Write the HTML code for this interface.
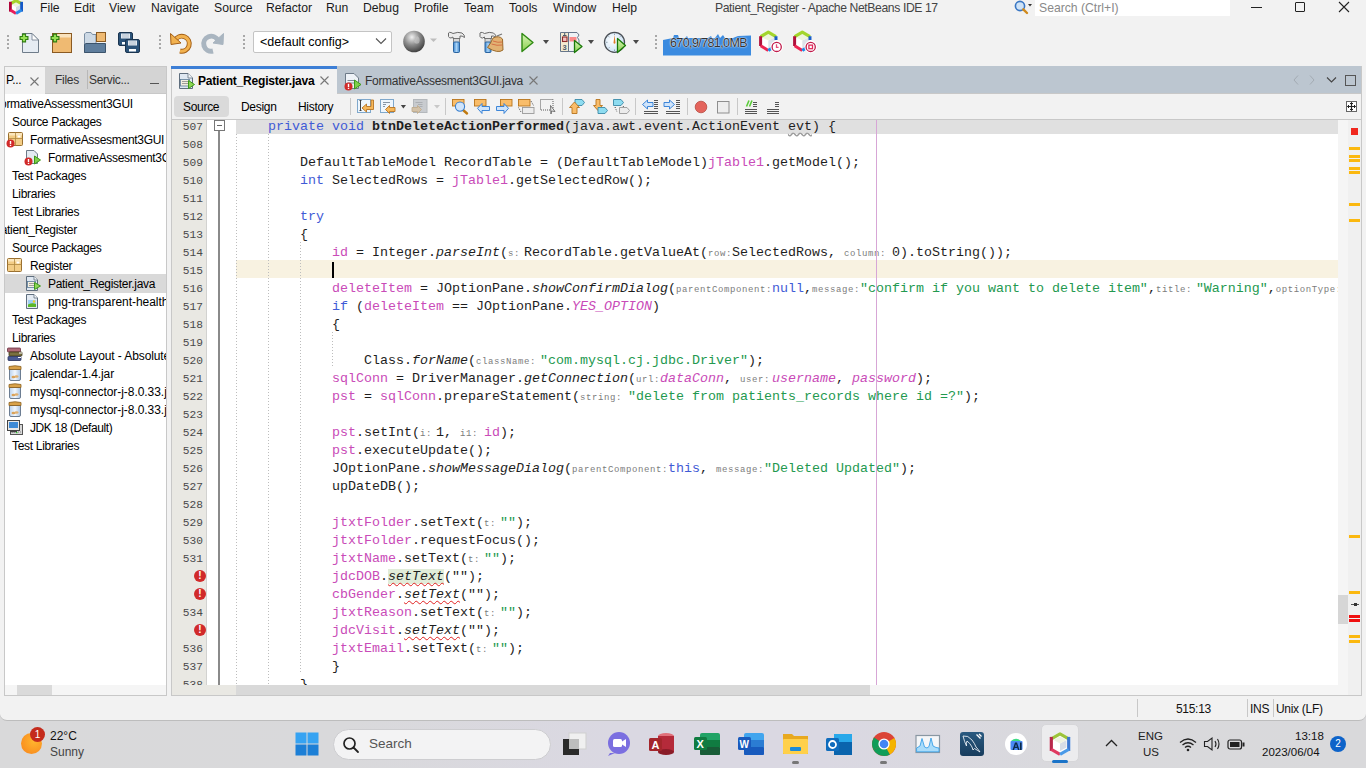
<!DOCTYPE html>
<html><head><meta charset="utf-8">
<style>
*{box-sizing:border-box}
html,body{margin:0;padding:0}
body{width:1366px;height:768px;overflow:hidden;position:relative;background:#f2f2f2;font-family:"Liberation Sans",sans-serif;color:#000}
.a{position:absolute}
.t{position:absolute;white-space:nowrap;line-height:1}
.menu{font-size:12.2px;top:2px;color:#1a1a1a}
/* panels */
#lp{left:4px;top:66px;width:163px;height:630px;border:1px solid #c8c8c8;background:#fff;overflow:hidden}
#lptabs{left:0;top:0;width:161px;height:27px;background:#d4d4d4;border-bottom:1px solid #c8c8c8}
.tree{font-size:12px;letter-spacing:-0.3px;color:#000}
#ed{left:171px;top:66px;width:1191px;height:630px;border:1px solid #c8c8c8;border-top:0;background:#f2f2f2}
#edtabs{left:0;top:0;width:1189px;height:27px;background:#bcc6d0}
#code{left:0;top:54px;width:1189px;height:565px;border-top:0;background:#fff;overflow:hidden}
.ln{position:absolute;left:64px;height:18px;width:1102px;white-space:pre;font-family:"Liberation Mono",monospace;font-size:13.33px;line-height:22px;color:#1e1e1e}
.hl0{background:#e0e0e0}
.hl1{background:#f8f2e1}
.k{color:#3f5bd6}
.f{color:#c94bb8}
.fi{color:#c94bb8;font-style:italic}
.i{font-style:italic}
.s{color:#23994f}
.b{font-weight:bold}
.u{text-decoration:underline wavy #9a9a9a;text-underline-offset:2px}
.h{display:inline-block;font-size:9px;letter-spacing:0.6px;color:#7c7c7c;vertical-align:baseline;overflow:visible;white-space:pre}
.e{font-style:italic;text-decoration:underline wavy #e02020;text-decoration-thickness:1px;text-underline-offset:2px}
.eh{background:#e1ecd9}
.caret{display:inline-block;width:2px;height:16px;background:#000;vertical-align:-4px}
.gn{position:absolute;left:0px;width:31px;height:18px;text-align:right;font-family:"Liberation Mono",monospace;font-size:11.2px;line-height:23px;color:#4a4a4a}
.err{display:inline-block;width:12px;height:12px;border-radius:50%;background:#d12a2a;vertical-align:-2px;position:relative;margin-right:-3px}
.err:after{content:"!";position:absolute;left:0;top:-1px;width:12px;text-align:center;color:#fff;font:bold 10px "Liberation Sans",sans-serif;line-height:14px}
.guide{position:absolute;top:0;width:1px;height:566px;background-image:linear-gradient(#bdbdbd 34%,transparent 34%);background-size:1px 3px}
.tb{font-size:12px;letter-spacing:-0.3px;color:#111}
.tk{position:absolute;top:0;height:100%}
</style></head>
<body>
<div class="a" style="left:0;top:700px;width:1366px;height:68px;background:linear-gradient(90deg,#d9d9da 0%,#d9d9db 25%,#dad8e2 45%,#dad8e2 60%,#d9d9dc 80%,#d9d9db 100%)"></div>
<div class="a" style="left:0;top:680px;width:1366px;height:41px;background:#f2f2f2;border-bottom:1px solid #bdbdbd;border-radius:0 0 7px 7px"></div>
<!-- ===== title / menu bar ===== -->
<svg class="a" style="left:0;top:0" width="30" height="18" viewBox="0 0 30 18">
 <path d="M16 -0.5L23 3.2V10.8L16 14.8L9 10.8V3.2Z" fill="#fff"/>
 <path d="M16 7L21 4.3V10L16 12.8Z" fill="#d3dce6"/>
 <path d="M16 1.8L21 4.3L16 7L11 4.3Z" fill="#eef5dc"/>
 <path d="M10.4 3.6L16 0.6L21.6 3.6" fill="none" stroke="#a6d12a" stroke-width="3" stroke-linejoin="round"/>
 <path d="M10.4 3.2V10.2" fill="none" stroke="#b0053a" stroke-width="2.8" stroke-linecap="square"/>
 <path d="M10.4 10L16 13.5" fill="none" stroke="#ea1c58" stroke-width="2.8"/>
 <path d="M21.6 3.2V10.2" fill="none" stroke="#1458c8" stroke-width="2.8" stroke-linecap="square"/>
 <path d="M21.6 10L16 13.5" fill="none" stroke="#2a8ae8" stroke-width="2.8"/>
</svg>
<div class="t menu" style="left:40px">File</div>
<div class="t menu" style="left:74px">Edit</div>
<div class="t menu" style="left:109px">View</div>
<div class="t menu" style="left:151px">Navigate</div>
<div class="t menu" style="left:214px">Source</div>
<div class="t menu" style="left:266px">Refactor</div>
<div class="t menu" style="left:326px">Run</div>
<div class="t menu" style="left:363px">Debug</div>
<div class="t menu" style="left:414px">Profile</div>
<div class="t menu" style="left:464px">Team</div>
<div class="t menu" style="left:509px">Tools</div>
<div class="t menu" style="left:553px">Window</div>
<div class="t menu" style="left:612px">Help</div>
<div class="t menu" style="left:715px;color:#444;letter-spacing:-0.4px">Patient_Register - Apache NetBeans IDE 17</div>
<svg class="a" style="left:1013px;top:0px" width="20" height="16" viewBox="0 0 20 16">
 <circle cx="7" cy="6" r="4.6" fill="#cfe3f7" stroke="#3a77c4" stroke-width="1.6"/>
 <line x1="10.3" y1="9.3" x2="14" y2="13" stroke="#d08a1c" stroke-width="2.4" stroke-linecap="round"/>
 <polygon points="15,4 19,4 17,6.5" fill="#333"/>
</svg>
<div class="a" style="left:1035px;top:0;width:195px;height:16px;background:#fff"></div>
<div class="t menu" style="left:1039px;color:#8a8a8a">Search (Ctrl+I)</div>
<div class="a" style="left:1251px;top:7px;width:11px;height:1px;background:#222"></div>
<div class="a" style="left:1295px;top:2px;width:10px;height:10px;border:1px solid #222;border-radius:1px"></div>
<svg class="a" style="left:1338px;top:1px" width="12" height="12" viewBox="0 0 12 12"><path d="M1 1L11 11M11 1L1 11" stroke="#222" stroke-width="1.1"/></svg>

<!-- ===== toolbar ===== -->
<!-- grips -->
<div class="a" style="left:7px;top:35px;width:2px;height:14px;background-image:linear-gradient(#a8a8a8 50%,transparent 50%);background-size:2px 4px"></div>
<div class="a" style="left:159px;top:35px;width:2px;height:14px;background-image:linear-gradient(#a8a8a8 50%,transparent 50%);background-size:2px 4px"></div>
<div class="a" style="left:243px;top:35px;width:2px;height:14px;background-image:linear-gradient(#a8a8a8 50%,transparent 50%);background-size:2px 4px"></div>
<div class="a" style="left:655px;top:35px;width:2px;height:14px;background-image:linear-gradient(#a8a8a8 50%,transparent 50%);background-size:2px 4px"></div>
<svg class="a" style="left:0;top:24px" width="240" height="38" viewBox="0 24 240 38">
 <!-- new file -->
 <path d="M22.5 33.5H32L38.5 40V52.5H22.5Z" fill="#e6ecf3" stroke="#6f7c8a"/>
 <path d="M32 33.5V40H38.5Z" fill="#fdfdfd" stroke="#6f7c8a" stroke-width="0.8"/>
 <path d="M24 33.5V42.5M19.5 38H28.5" stroke="#2f7d12" stroke-width="4.2"/>
 <path d="M24 34.7V41.3M20.7 38H27.3" stroke="#96e055" stroke-width="2.2"/>
 <!-- new project -->
 <rect x="52.5" y="33.5" width="19" height="19" fill="#efba72" stroke="#8a5a22"/>
 <rect x="53" y="34" width="18" height="3.5" fill="#f9e2bd"/>
 <path d="M55 33.5V42.5M50.5 38H59.5" stroke="#2f7d12" stroke-width="4.2"/>
 <path d="M55 34.7V41.3M51.7 38H58.3" stroke="#96e055" stroke-width="2.2"/>
 <!-- open project -->
 <path d="M84.5 52.5V34L86 32.5H91L92.5 34.5H96V52.5Z" fill="#cdd9e5" stroke="#7a8ea3"/>
 <rect x="96.5" y="32.5" width="9" height="9" fill="#efba72" stroke="#8a5a22"/>
 <path d="M84.5 52.5V44.5L86 43.5H105.5V52.5Z" fill="#5f7e9d" stroke="#3c546c"/>
 <!-- save all -->
 <rect x="118.5" y="32.5" width="14" height="13" rx="1.5" fill="#2c5379" stroke="#1b3550"/>
 <rect x="121" y="33.5" width="9" height="5" fill="#e4eaf0"/>
 <path d="M122 35H129M122 37H129" stroke="#9aabbd" stroke-width="0.7"/>
 <rect x="122" y="42" width="7" height="2.5" fill="#fff"/>
 <rect x="125.5" y="39.5" width="14" height="13" rx="1.5" fill="#2c5379" stroke="#1b3550"/>
 <rect x="128" y="40.5" width="9" height="5" fill="#e4eaf0"/>
 <path d="M129 42H136M129 44H136" stroke="#9aabbd" stroke-width="0.7"/>
 <rect x="129" y="49" width="7" height="2.5" fill="#fff"/>
 <!-- undo -->
 <path d="M175 40.5 A7.5 7.5 0 1 1 180 51" fill="none" stroke="#a45f16" stroke-width="5"/>
 <path d="M175 40.5 A7.5 7.5 0 1 1 180 51" fill="none" stroke="#f2b24f" stroke-width="3"/>
 <path d="M170.5 33.5L171 44.5L181 43Z" fill="#f2b24f" stroke="#a45f16" stroke-linejoin="round"/>
 <!-- redo -->
 <path d="M218 40.5 A7.5 7.5 0 1 0 213 51" fill="none" stroke="#a9b5c0" stroke-width="5"/>
 <path d="M223.5 33.5L223 44.5L213 43Z" fill="#a9b5c0" stroke="#a9b5c0" stroke-linejoin="round"/>
</svg>
<!-- combo -->
<div class="a" style="left:253px;top:31px;width:139px;height:22px;background:#fff;border:1px solid #c4c4c4;border-radius:2px"></div>
<div class="t" style="left:260px;top:36px;font-size:12.5px">&lt;default config&gt;</div>
<svg class="a" style="left:375px;top:37px" width="12" height="8" viewBox="0 0 12 8"><path d="M1 1.5L6 6.5L11 1.5" fill="none" stroke="#555" stroke-width="1.1"/></svg>
<svg class="a" style="left:395px;top:24px" width="120" height="38" viewBox="395 24 120 38">
 <defs><radialGradient id="gg" cx="0.4" cy="0.3" r="0.8"><stop offset="0" stop-color="#f0f0f0"/><stop offset="0.45" stop-color="#8c8c8c"/><stop offset="1" stop-color="#2e2e2e"/></radialGradient>
 <linearGradient id="hb" x1="0" x2="1"><stop offset="0" stop-color="#3d86d0"/><stop offset="0.5" stop-color="#a9d3f5"/><stop offset="1" stop-color="#3d86d0"/></linearGradient></defs>
 <circle cx="414" cy="41.5" r="10.8" fill="url(#gg)"/>
 <path d="M417 36Q421 38 419 43Q416 45 414 42Z" fill="#c8c8c8" opacity="0.6"/>
 <path d="M430 38.5H437L433.5 42Z" fill="#bdbdbd"/>
 <!-- hammer -->
 <path d="M448.5 33Q449 32 451 32.5L453 33.5Q458 31.5 462 33Q465 35 464.5 37.5Q462 35.5 460 36V38.5H453V37L451 38Q449 38 448.5 36.5Z" fill="#ececec" stroke="#6a6a6a" stroke-width="1"/>
 <rect x="453.5" y="38.5" width="6" height="4" fill="#d8d8d8" stroke="#6a6a6a" stroke-width="0.8"/>
 <rect x="453.5" y="42" width="6" height="10.5" rx="1" fill="url(#hb)" stroke="#2a64a0" stroke-width="1"/>
 <!-- clean build -->
 <path d="M480 33Q480.5 32 482.5 32.5L484.5 33.5Q489.5 31.5 493.5 33Q496.5 35 496 37.5Q493.5 35.5 491.5 36V38.5H484.5V37L482.5 38Q480.5 38 480 36.5Z" fill="#ececec" stroke="#6a6a6a" stroke-width="1"/>
 <rect x="485" y="38.5" width="6" height="4" fill="#d8d8d8" stroke="#6a6a6a" stroke-width="0.8"/>
 <rect x="485" y="42" width="6" height="10.5" rx="1" fill="url(#hb)" stroke="#2a64a0" stroke-width="1"/>
 <path d="M497 36L502 34" stroke="#777" stroke-width="1.3"/>
 <path d="M493 38Q499 35 502.5 39L503 50Q498 54 487.5 47.5Q491 43 493 38Z" fill="#e2b273" stroke="#9a6a2a" stroke-width="1"/>
 <path d="M493 41Q498 43 502.5 42M491.5 44Q497 46 502.5 45" fill="none" stroke="#d0603a" stroke-width="0.8"/>
</svg>
<!-- run -->
<svg class="a" style="left:520px;top:32px" width="15" height="22" viewBox="0 0 15 22">
 <defs><linearGradient id="rg" x1="0" y1="0" x2="0" y2="1"><stop offset="0" stop-color="#d8f5b8"/><stop offset="1" stop-color="#8bd04e"/></linearGradient></defs>
 <path d="M2 1.5L13 10.5L2 19.5Z" fill="url(#rg)" stroke="#2f8a12" stroke-width="1.4" stroke-linejoin="round"/>
</svg>
<svg class="a" style="left:542.5px;top:40px" width="6" height="4" viewBox="0 0 6 4"><path d="M0 0H6L3 4Z" fill="#4a4a4a"/></svg>
<!-- debug -->
<svg class="a" style="left:555px;top:28px" width="30" height="28" viewBox="555 28 30 28">
 <defs><linearGradient id="rg2" x1="0" y1="0" x2="0" y2="1"><stop offset="0" stop-color="#d8f5b8"/><stop offset="1" stop-color="#8bd04e"/></linearGradient></defs>
 <path d="M560.5 32.5H577L579 35L577.5 37.5L579 40V47L576 51.5H560.5Z" fill="#eef1f4" stroke="#66768a" stroke-width="1"/>
 <rect x="561" y="33" width="7.5" height="18" fill="#f3ead0"/>
 <path d="M568.5 32.5V51.5" stroke="#66768a" stroke-width="1"/>
 <path d="M564.7 33V35.5M563 35.5H566.5" stroke="#4a5a6a" stroke-width="1"/>
 <rect x="562.5" y="37" width="4.5" height="4.5" fill="#f4c0c0" stroke="#8a2a2a" stroke-width="1.1"/>
 <text x="562.6" y="49.5" font-family="Liberation Sans" font-size="7.5" font-weight="bold" fill="#4a5a6a">3</text>
 <rect x="569.5" y="37" width="7" height="4.5" fill="#fb8a8a"/>
 <path d="M574.5 40.5L582 46.5L574.5 52.5Z" fill="url(#rg2)" stroke="#1a7a0a" stroke-width="1.3" stroke-linejoin="round"/>
</svg>
<svg class="a" style="left:587.5px;top:40px" width="6" height="4" viewBox="0 0 6 4"><path d="M0 0H6L3 4Z" fill="#4a4a4a"/></svg>
<!-- profile -->
<svg class="a" style="left:598px;top:28px" width="30" height="28" viewBox="598 28 30 28">
 <defs><radialGradient id="cg" cx="0.4" cy="0.4" r="0.7"><stop offset="0" stop-color="#ffffff"/><stop offset="1" stop-color="#c8e0f5"/></radialGradient>
 <linearGradient id="rg3" x1="0" y1="0" x2="0" y2="1"><stop offset="0" stop-color="#d8f5b8"/><stop offset="1" stop-color="#8bd04e"/></linearGradient></defs>
 <circle cx="614.5" cy="42.3" r="10" fill="url(#cg)" stroke="#4a4f55" stroke-width="1.3"/>
 <path d="M614.5 33.5V35M614.5 49.5V51M606 42.3H607.5M608.5 36.3L609.5 37.3M608.5 48.3L609.5 47.3M620.5 36.3L619.5 37.3" stroke="#7a8a9a" stroke-width="0.8"/>
 <path d="M613.5 43Q614.5 44.5 615.5 43L614.5 35Z" fill="#e07a2a"/>
 <path d="M617.5 38.5L625.5 45.5L617.5 52.5Z" fill="url(#rg3)" stroke="#1a7a0a" stroke-width="1.3" stroke-linejoin="round"/>
</svg>
<svg class="a" style="left:632.5px;top:40px" width="6" height="4" viewBox="0 0 6 4"><path d="M0 0H6L3 4Z" fill="#4a4a4a"/></svg>
<!-- memory -->
<svg class="a" style="left:663px;top:32px" width="89" height="24" viewBox="0 0 89 24">
 <path d="M0 8L5 7L10 6L11 3L15 3L16 6L22 6L24 4L25 6L30 6L45 6L48 4L49 6L52 6L55 2L57 6L60 3L62 6L70 6L75 4L88 3.5V23.5H0Z" fill="#3b8be0"/>
</svg>
<div class="t" style="left:670px;top:37px;font-size:12.5px;color:#333;letter-spacing:-0.6px;text-shadow:0 0 2px #fff,0 0 1px #fff">670,9/781,0MB</div>
<!-- nb profiler icons -->
<svg class="a" style="left:750px;top:24px" width="80" height="38" viewBox="750 24 80 38">
 <g id="nbi">
 <path d="M768.3 30.5L777.5 35.8V46.5L768.3 52L759.1 46.5V35.8Z" fill="#fff"/>
 <path d="M768.3 40.5L775.5 37V45.5L768.3 50Z" fill="#dde3ea"/>
 <path d="M768.3 33L775.5 37L768.3 40.5L761 37Z" fill="#eef5dc"/>
 <path d="M760.6 36.6L768.3 32.2L776 36.6" fill="none" stroke="#a3d52c" stroke-width="3.2" stroke-linejoin="round"/>
 <path d="M760.6 36.2V46" fill="none" stroke="#b0103c" stroke-width="3"/>
 <path d="M760.6 45.7L768.3 50.5" fill="none" stroke="#ec2452" stroke-width="3"/>
 <path d="M776 36.2V40" fill="none" stroke="#1b5fc9" stroke-width="3"/>
 <path d="M768.3 50.5L772 48" fill="none" stroke="#1a8ae8" stroke-width="3"/>
 </g>
 <circle cx="776.7" cy="46.9" r="6.3" fill="#fff"/>
 <circle cx="776.7" cy="46.9" r="4.6" fill="#fff" stroke="#c01b4b" stroke-width="1.3"/>
 <path d="M776.5 44.2V47.3H778.6" fill="none" stroke="#e4507a" stroke-width="1.3"/>
 <use href="#nbi" x="34"/>
 <circle cx="810.7" cy="46.9" r="6.3" fill="#fff"/>
 <circle cx="810.7" cy="46.9" r="4.6" fill="#fff" stroke="#c01b4b" stroke-width="1.3"/>
 <rect x="808.9" y="45.1" width="3.6" height="3.6" fill="none" stroke="#e02a5a" stroke-width="1.3"/>
</svg>


<!-- ===== left panel ===== -->
<div class="a" id="lp">
 <div class="a" id="lptabs"></div>
 <div class="a" style="left:0;top:0;width:40px;height:27px;background:#f2f2f2"></div>
 <div class="t tree" style="left:1px;top:7px">P...</div>
 <svg class="a" style="left:25px;top:10px" width="9" height="9" viewBox="0 0 9 9"><path d="M0.5 0.5L8.5 8.5M8.5 0.5L0.5 8.5" stroke="#777" stroke-width="1.1"/></svg>
 <div class="t tree" style="left:50px;top:7px;color:#333">Files</div>
 <div class="a" style="left:82px;top:3px;width:1px;height:19px;background:#b8b8b8"></div>
 <div class="t tree" style="left:84px;top:7px;color:#333">Servic...</div>
 <div class="a" style="left:145px;top:16px;width:9px;height:1px;background:#555"></div>
  <div class="a" style="left:0;top:207px;width:161px;height:19px;background:#d9d9d9"></div>
 <div class="t tree" style="left:-12px;top:31px">FormativeAssessment3GUI</div>
 <div class="t tree" style="left:7px;top:49px">Source Packages</div>
 <svg class="a" style="left:1px;top:64px" width="18" height="17" viewBox="0 0 18 17"><rect x="2.5" y="1.5" width="14" height="13" rx="1" fill="#f3cd86" stroke="#9a7030"/><rect x="3" y="2" width="13" height="2.5" fill="#fbe6bc"/><path d="M9.5 1.5V14.5M2.5 7.5H16.5" stroke="#b08840" stroke-width="0.8"/><rect x="11.5" y="4.5" width="3" height="2" fill="#fff"/><circle cx="4.5" cy="12.5" r="4" fill="#d12a2a"/><rect x="3.8" y="10" width="1.4" height="3" fill="#fff"/><rect x="3.8" y="13.8" width="1.4" height="1.2" fill="#fff"/></svg>
 <div class="t tree" style="left:25px;top:67px">FormativeAssesment3GUI</div>
 <svg class="a" style="left:19px;top:82px" width="18" height="17" viewBox="0 0 18 17"><path d="M2.5 1.5H10L13.5 5V14.5H2.5Z" fill="#e3eaf2" stroke="#6d7a88"/><path d="M10.5 7L16.5 11L10.5 15Z" fill="#7fcf4a" stroke="#3c9a1a"/><circle cx="4.5" cy="12.5" r="4" fill="#d12a2a"/><rect x="3.8" y="10" width="1.4" height="3" fill="#fff"/><rect x="3.8" y="13.8" width="1.4" height="1.2" fill="#fff"/></svg>
 <div class="t tree" style="left:43px;top:85px">FormativeAssesment3GUI.java</div>
 <div class="t tree" style="left:7px;top:103px">Test Packages</div>
 <div class="t tree" style="left:7px;top:121px">Libraries</div>
 <div class="t tree" style="left:7px;top:139px">Test Libraries</div>
 <div class="t tree" style="left:-12px;top:157px">Patient_Register</div>
 <div class="t tree" style="left:7px;top:175px">Source Packages</div>
 <svg class="a" style="left:1px;top:190px" width="18" height="17" viewBox="0 0 18 17"><rect x="1.5" y="1.5" width="14" height="13" rx="1" fill="#f3cd86" stroke="#9a7030"/><rect x="2" y="2" width="13" height="2.5" fill="#fbe6bc"/><path d="M8.5 1.5V14.5M1.5 7.5H15.5" stroke="#b08840" stroke-width="0.8"/><rect x="10.5" y="4.5" width="3" height="2" fill="#fff"/></svg>
 <div class="t tree" style="left:25px;top:193px">Register</div>
 <svg class="a" style="left:19px;top:208px" width="18" height="17" viewBox="0 0 18 17">
 <path d="M2.5 1.5H10L13.5 5V15.5H2.5Z" fill="#dfe8f2" stroke="#5f6e7e"/>
 <path d="M10 1.5V5H13.5" fill="#f5f8fb" stroke="#5f6e7e" stroke-width="0.8"/>
 <rect x="3.5" y="6.5" width="8" height="6" fill="#f4efe0" stroke="#5a7a9a" stroke-width="0.8"/>
 <path d="M5 8.5H10M5 10.5H10" stroke="#8a8a8a" stroke-width="0.8"/>
 <path d="M10.5 7.5L16.5 11L10.5 14.5Z" fill="#8fd655" stroke="#3c9a1a"/>
</svg>
 <div class="t tree" style="left:43px;top:211px">Patient_Register.java</div>
 <svg class="a" style="left:19px;top:226px" width="18" height="17" viewBox="0 0 18 17">
 <path d="M2.5 1.5H10L13.5 5V15.5H2.5Z" fill="#e3eaf2" stroke="#5f6e7e"/>
 <path d="M10 1.5V5H13.5" fill="#f5f8fb" stroke="#5f6e7e" stroke-width="0.8"/>
 <rect x="4" y="7" width="8" height="7" fill="#9fd0f5"/>
 <path d="M4 11.5Q8 9.5 12 11V14H4Z" fill="#5cb82a"/>
 <circle cx="10" cy="8.5" r="1.2" fill="#f5d020"/>
</svg>
 <div class="t tree" style="left:43px;top:229px;letter-spacing:-0.05px">png-transparent-healthcare</div>
 <div class="t tree" style="left:7px;top:247px">Test Packages</div>
 <div class="t tree" style="left:7px;top:265px">Libraries</div>
 <svg class="a" style="left:1px;top:280px" width="18" height="17" viewBox="0 0 18 17">
 <rect x="1.5" y="1" width="13" height="4" rx="0.8" fill="#b06a78" stroke="#6a3040" stroke-width="0.8"/>
 <rect x="3" y="5" width="13" height="4" rx="0.8" fill="#7a7040" stroke="#40381a" stroke-width="0.8"/>
 <rect x="2" y="9.5" width="13" height="4" rx="0.8" fill="#4a5a94" stroke="#26305a" stroke-width="0.8"/>
 <path d="M13 6H16M12 10.5H15" stroke="#fff" stroke-width="1"/>
</svg>
 <div class="t tree" style="left:25px;top:283px;letter-spacing:-0.1px">Absolute Layout - AbsoluteLayout</div>
 <svg class="a" style="left:1px;top:298px" width="18" height="17" viewBox="0 0 18 17">
 <defs><linearGradient id="jg" x1="0" x2="1"><stop offset="0" stop-color="#b9d2ee"/><stop offset="0.5" stop-color="#f2f7fd"/><stop offset="1" stop-color="#a9c4e4"/></linearGradient></defs>
 <path d="M3.5 4.5H14.5V14Q14.5 15.5 13 15.5H5Q3.5 15.5 3.5 14Z" fill="url(#jg)" stroke="#6c7d92"/>
 <path d="M3 1.5Q9 0 15 1.5V4.5H3Z" fill="#d9a24a" stroke="#8a6020" stroke-width="0.8"/>
 <ellipse cx="7.5" cy="12" rx="2" ry="1.2" fill="#d9a25a"/><ellipse cx="10.5" cy="11.5" rx="2" ry="1.2" fill="#e0b070"/>
</svg>
 <div class="t tree" style="left:25px;top:301px;letter-spacing:-0.12px">jcalendar-1.4.jar</div>
 <svg class="a" style="left:1px;top:316px" width="18" height="17" viewBox="0 0 18 17">
 <defs><linearGradient id="jg" x1="0" x2="1"><stop offset="0" stop-color="#b9d2ee"/><stop offset="0.5" stop-color="#f2f7fd"/><stop offset="1" stop-color="#a9c4e4"/></linearGradient></defs>
 <path d="M3.5 4.5H14.5V14Q14.5 15.5 13 15.5H5Q3.5 15.5 3.5 14Z" fill="url(#jg)" stroke="#6c7d92"/>
 <path d="M3 1.5Q9 0 15 1.5V4.5H3Z" fill="#d9a24a" stroke="#8a6020" stroke-width="0.8"/>
 <ellipse cx="7.5" cy="12" rx="2" ry="1.2" fill="#d9a25a"/><ellipse cx="10.5" cy="11.5" rx="2" ry="1.2" fill="#e0b070"/>
</svg>
 <div class="t tree" style="left:25px;top:319px;letter-spacing:-0.05px">mysql-connector-j-8.0.33.jar</div>
 <svg class="a" style="left:1px;top:334px" width="18" height="17" viewBox="0 0 18 17">
 <defs><linearGradient id="jg" x1="0" x2="1"><stop offset="0" stop-color="#b9d2ee"/><stop offset="0.5" stop-color="#f2f7fd"/><stop offset="1" stop-color="#a9c4e4"/></linearGradient></defs>
 <path d="M3.5 4.5H14.5V14Q14.5 15.5 13 15.5H5Q3.5 15.5 3.5 14Z" fill="url(#jg)" stroke="#6c7d92"/>
 <path d="M3 1.5Q9 0 15 1.5V4.5H3Z" fill="#d9a24a" stroke="#8a6020" stroke-width="0.8"/>
 <ellipse cx="7.5" cy="12" rx="2" ry="1.2" fill="#d9a25a"/><ellipse cx="10.5" cy="11.5" rx="2" ry="1.2" fill="#e0b070"/>
</svg>
 <div class="t tree" style="left:25px;top:337px;letter-spacing:-0.05px">mysql-connector-j-8.0.33.jar</div>
 <svg class="a" style="left:1px;top:352px" width="18" height="17" viewBox="0 0 18 17">
 <rect x="4.5" y="5.5" width="12" height="10" fill="#d8d8d8" stroke="#555"/>
 <path d="M6 13H15" stroke="#888" stroke-dasharray="1,1"/>
 <rect x="1.5" y="1.5" width="12" height="10" fill="#e8e8e8" stroke="#444"/>
 <rect x="3" y="3" width="9" height="6" fill="#3d8ad6"/>
 <path d="M4 12.5H11" stroke="#444" stroke-width="1.5"/>
 <rect x="10" y="13" width="1.5" height="1.2" fill="#3c3"/>
</svg>
 <div class="t tree" style="left:25px;top:355px;letter-spacing:-0.4px">JDK 18 (Default)</div>
 <div class="t tree" style="left:7px;top:373px">Test Libraries</div>

 <div class="a" style="left:0;top:618px;width:161px;height:10px;background:#f5f5f5"></div>
 <div class="a" style="left:12px;top:618px;width:35px;height:10px;background:#dadada"></div>
</div>

<!-- ===== editor ===== -->
<div class="a" id="ed">
 <div class="a" id="edtabs"></div>
  <div class="a" style="left:0px;top:0px;width:165px;height:28px;background:#f2f2f2"></div>
 <div class="a" style="left:-1px;top:0px;width:166px;height:3px;background:#3d7fd6"></div>
 <svg class="a" style="left:6px;top:6px" width="18" height="18" viewBox="0 0 18 18">
  <path d="M1.5 1.5H10L14.5 6V16.5H1.5Z" fill="#dfe8f2" stroke="#5f6e7e"/>
  <path d="M10 1.5V6H14.5" fill="#f5f8fb" stroke="#5f6e7e" stroke-width="0.8"/>
  <rect x="2.5" y="7.5" width="9" height="6.5" fill="#f4efe0" stroke="#5a7a9a" stroke-width="0.8"/>
  <path d="M4 9.5H10M4 11.5H10" stroke="#8a8a8a" stroke-width="0.8"/>
  <path d="M10.5 8.5L16.5 12.5L10.5 16.5Z" fill="#8fd655" stroke="#3c9a1a"/>
 </svg>
 <div class="t" style="left:26px;top:9px;font-size:12px;letter-spacing:-0.2px;font-weight:bold">Patient_Register.java</div>
 <svg class="a" style="left:148px;top:10px" width="9" height="9" viewBox="0 0 9 9"><path d="M0.5 0.5L8.5 8.5M8.5 0.5L0.5 8.5" stroke="#777" stroke-width="1.1"/></svg>
 <svg class="a" style="left:172px;top:6px" width="18" height="19" viewBox="0 0 18 19">
  <path d="M1.5 1.5H10L14.5 6V16.5H1.5Z" fill="#eef2f7" stroke="#6d7a88"/>
  <path d="M3.5 8.5H11M3.5 11H11" stroke="#7a8898"/>
  <path d="M10.5 8L17 12.5L10.5 17Z" fill="#7fcf4a" stroke="#3c9a1a"/>
  <circle cx="4.5" cy="14.5" r="4" fill="#d12a2a"/>
  <rect x="3.8" y="11.8" width="1.4" height="3.2" fill="#fff"/><rect x="3.8" y="15.8" width="1.4" height="1.2" fill="#fff"/>
 </svg>
 <div class="t" style="left:193px;top:9px;font-size:12px;letter-spacing:-0.3px;color:#333">FormativeAssesment3GUI.java</div>
 <svg class="a" style="left:357px;top:10px" width="9" height="9" viewBox="0 0 9 9"><path d="M0.5 0.5L8.5 8.5M8.5 0.5L0.5 8.5" stroke="#777" stroke-width="1.1"/></svg>
 <!-- right nav -->
 <svg class="a" style="left:1120px;top:8px" width="70" height="14" viewBox="0 0 70 14">
  <path d="M6 1.5L2 6L6 10.5" fill="none" stroke="#a3abb3" stroke-width="1"/>
  <path d="M18 1.5L22 6L18 10.5" fill="none" stroke="#a3abb3" stroke-width="1"/>
  <path d="M35 3.5L39.5 8L44 3.5" fill="none" stroke="#444" stroke-width="1.1"/>
  <rect x="53.5" y="1.5" width="10" height="10" fill="none" stroke="#555"/>
 </svg>

  <div class="a" style="left:2px;top:30px;width:55px;height:21px;background:#dadada;border-radius:4px"></div>
 <div class="t" style="left:11px;top:35px;font-size:12px;letter-spacing:-0.3px">Source</div>
 <div class="t" style="left:69px;top:35px;font-size:12px;letter-spacing:-0.3px">Design</div>
 <div class="t" style="left:126px;top:35px;font-size:12px;letter-spacing:-0.3px">History</div>
 <div class="a" style="left:178px;top:32px;width:1px;height:17px;background:#c8c8c8"></div>
 <div class="a" style="left:273px;top:32px;width:1px;height:17px;background:#c8c8c8"></div>
 <div class="a" style="left:390px;top:32px;width:1px;height:17px;background:#c8c8c8"></div>
 <div class="a" style="left:463px;top:32px;width:1px;height:17px;background:#c8c8c8"></div>
 <div class="a" style="left:515px;top:32px;width:1px;height:17px;background:#c8c8c8"></div>
 <div class="a" style="left:565px;top:32px;width:1px;height:17px;background:#c8c8c8"></div>
 <svg class="a" style="left:184px;top:32px" width="600" height="18" viewBox="0 0 600 18">
  <!-- last edit -->
  <g transform="translate(-356 -98)">
  <rect x="357.5" y="99.5" width="13" height="13" fill="#eef6fd" stroke="#7fa8cc"/>
  <path d="M359.5 100.5H361.5M360.5 100.5V110.5M359.5 110.5H361.5" stroke="#333" stroke-width="0.9"/>
  <path d="M371 100V106.5H366.5V104L362 108L366.5 112V109.5H373.5V100Z" fill="#f7b85a" stroke="#b87422" stroke-width="0.9" stroke-linejoin="round"/>
  <!-- prev edit -->
  <rect x="380.5" y="99.5" width="13" height="13" fill="#eef6fd" stroke="#7fa8cc"/>
  <path d="M383 102.5H390M383 104.5H386M383 106.5H385" stroke="#7a8a9a" stroke-width="0.9"/>
  <path d="M385.5 109.5L389.5 105.5V107.5H395V111.5H389.5V113.5Z" fill="#f7b85a" stroke="#b87422" stroke-width="0.9" stroke-linejoin="round"/>
  <path d="M400.8 105H406L403.4 108.5Z" fill="#444"/>
  <!-- next edit grey -->
  <rect x="413.5" y="99.5" width="13.5" height="13" fill="#c8cbcf" stroke="#b4b8bc"/>
  <path d="M415.5 102.5H422.5M418 104.5H422.5M419.5 106.5H422.5" stroke="#a8acb0" stroke-width="0.9"/>
  <path d="M421.5 109.5L417.5 105.5V107.5H412V111.5H417.5V113.5Z" fill="#d4c2a8" stroke="#c0ad90" stroke-width="0.9" stroke-linejoin="round"/>
  <path d="M434 105H440L437 108.5Z" fill="#c8c8c8"/>
  </g>
  <g transform="translate(-356 -98)">
  <!-- find -->
  <rect x="452.5" y="99.5" width="11.5" height="6.5" fill="#f9bd6a" stroke="#b8741c" stroke-width="0.9"/>
  <path d="M462.5 109.5L467 113.5" stroke="#c07a10" stroke-width="2.4" stroke-linecap="round"/>
  <circle cx="460" cy="106.6" r="4.6" fill="#cfe4fb" stroke="#3a80d0" stroke-width="1.1"/>
  <!-- find prev -->
  <rect x="474.5" y="99.5" width="11.5" height="6.5" fill="#f9bd6a" stroke="#b8741c" stroke-width="0.9"/>
  <path d="M477.5 108.3L482 103.5V106.5H489.5V110.5H482V113.5Z" fill="#cfe4fb" stroke="#2a7ad4" stroke-width="0.9" stroke-linejoin="round"/>
  <!-- find next -->
  <rect x="500.5" y="99.5" width="11.5" height="6.5" fill="#f9bd6a" stroke="#b8741c" stroke-width="0.9"/>
  <path d="M508.5 108.3L504 103.5V106.5H496.5V110.5H504V113.5Z" fill="#cfe4fb" stroke="#2a7ad4" stroke-width="0.9" stroke-linejoin="round"/>
  <!-- find sel -->
  <rect x="518.5" y="99.5" width="11.5" height="6.5" fill="#f9bd6a" stroke="#b8741c" stroke-width="0.9"/>
  <path d="M531 101L533.5 105.5M518.5 107.5L521 112" stroke="#333" stroke-width="0.8" stroke-dasharray="1,1"/>
  <rect x="522.5" y="107.5" width="11.5" height="6" fill="#ececec" stroke="#9a9a9a" stroke-width="0.9"/>
  <!-- select -->
  <rect x="540.5" y="99.5" width="12.5" height="10.5" fill="none" stroke="#333" stroke-width="0.8" stroke-dasharray="1,1"/>
  <path d="M550.5 105.5L555 111.5L551.5 111L551 114Z" fill="#eee" stroke="#666" stroke-width="0.9" stroke-linejoin="round"/>
  </g>
  <!-- bookmark up -->
  <path d="M385 9L389.5 4.5L394 9H391.5V16H387.5V9Z" transform="translate(-0,0)" fill="none"/>
  <path d="M201 0" />
 </svg>
 <svg class="a" style="left:396px;top:32px" width="400" height="18" viewBox="0 0 400 18">
  <g transform="translate(-568 -98)">
  <!-- up -->
  <path d="M575 99.5H582L584.5 102.5L582 105.5H575Z" fill="#8edcf0" stroke="#3a8aa8" stroke-width="0.9" stroke-linejoin="round"/>
  <path d="M569.5 107.5L574.5 102L579.5 107.5H577V113.5H572V107.5Z" fill="#f9bd6a" stroke="#b8741c" stroke-width="0.9" stroke-linejoin="round"/>
  <!-- down -->
  <path d="M596 99.5H600V105.5H602.5L598 110.5L593.5 105.5H596Z" fill="#f9bd6a" stroke="#b8741c" stroke-width="0.9" stroke-linejoin="round"/>
  <path d="M598 107.5H605L607.5 110.5L605 113.5H598Z" fill="#8edcf0" stroke="#3a8aa8" stroke-width="0.9" stroke-linejoin="round"/>
  <!-- toggle -->
  <path d="M613.5 99.5H621L623.5 102.5L621 105.5H613.5Z" fill="#8edcf0" stroke="#3a8aa8" stroke-width="0.9" stroke-linejoin="round"/>
  <path d="M615 107L617 112M623 106L624 107.5" stroke="#222" stroke-width="0.9" stroke-dasharray="1,1.5"/>
  <path d="M619.5 107.5H627L629.5 110.5L627 113.5H619.5Z" fill="#ececec" stroke="#9a9a9a" stroke-width="0.9" stroke-linejoin="round"/>
  <!-- shift left -->
  <path d="M642.5 104.5L647.5 100V102.5H653V106.5H647.5V109Z" fill="#cfe4fb" stroke="#2a7ad4" stroke-width="0.9" stroke-linejoin="round"/>
  <path d="M654 100.5H658M654 102.5H658M654 104.5H658M654 106.5H658M654 108.5H658M644 111.5H658M644 113.5H658" stroke="#555" stroke-width="1"/>
  <!-- shift right -->
  <path d="M674.5 104.5L669.5 100V102.5H664V106.5H669.5V109Z" fill="#cfe4fb" stroke="#2a7ad4" stroke-width="0.9" stroke-linejoin="round"/>
  <path d="M676 100.5H680M676 102.5H680M676 104.5H680M676 106.5H680M676 108.5H680M666 111.5H680M666 113.5H680" stroke="#555" stroke-width="1"/>
  </g>
  <g transform="translate(-568 -98)">
  <!-- record -->
  <circle cx="701" cy="107" r="5.8" fill="#e4645c" stroke="#b84a40" stroke-width="0.8"/>
  <!-- stop -->
  <rect x="717.5" y="101.5" width="11.5" height="11.5" fill="#ededed" stroke="#8e8e8e" stroke-width="1"/>
  <!-- comment -->
  <path d="M746.5 106.5L749 100.5M749.5 106.5L752 100.5" stroke="#5ccc3a" stroke-width="1.6"/>
  <path d="M753 102.5H757M753 104.5H757M753 106.5H757M745 109.5H757M745 111.5H757M745 113.5H757" stroke="#555" stroke-width="1"/>
  <!-- uncomment -->
  <path d="M775 102.5H779M775 104.5H779M775 106.5H779M767 109.5H779M767 111.5H779M767 113.5H779" stroke="#555" stroke-width="1"/>
  </g>
 </svg>
 <svg class="a" style="left:1174px;top:35px" width="11" height="11" viewBox="0 0 11 11">
  <rect x="0.5" y="0.5" width="10" height="10" fill="#fff" stroke="#666"/>
  <path d="M5.5 1.5V9.5M1.5 5.5H9.5" stroke="#222" stroke-width="1.2"/>
  <path d="M4 3L5.5 1.5L7 3M4 8L5.5 9.5L7 8M3 4L1.5 5.5L3 7M8 4L9.5 5.5L8 7" fill="none" stroke="#222"/>
 </svg>

 <div class="a" id="code">
  <div class="a" style="left:0;top:0;width:35px;height:566px;background:#e9e8e3;border-right:1px solid #d2d2d0"></div>
  <div class="a" style="left:36px;top:0;width:29px;height:566px;background:#fff"></div>
  <div class="gn" style="top:-4px">507</div>
<div class="gn" style="top:14px">508</div>
<div class="gn" style="top:32px">509</div>
<div class="gn" style="top:50px">510</div>
<div class="gn" style="top:68px">511</div>
<div class="gn" style="top:86px">512</div>
<div class="gn" style="top:104px">513</div>
<div class="gn" style="top:122px">514</div>
<div class="gn" style="top:140px">515</div>
<div class="gn" style="top:158px">516</div>
<div class="gn" style="top:176px">517</div>
<div class="gn" style="top:194px">518</div>
<div class="gn" style="top:212px">519</div>
<div class="gn" style="top:230px">520</div>
<div class="gn" style="top:248px">521</div>
<div class="gn" style="top:266px">522</div>
<div class="gn" style="top:284px">523</div>
<div class="gn" style="top:302px">524</div>
<div class="gn" style="top:320px">525</div>
<div class="gn" style="top:338px">526</div>
<div class="gn" style="top:356px">527</div>
<div class="gn" style="top:374px">528</div>
<div class="gn" style="top:392px">529</div>
<div class="gn" style="top:410px">530</div>
<div class="gn" style="top:428px">531</div>
<div class="gn" style="top:446px"><span class="err"></span></div>
<div class="gn" style="top:464px"><span class="err"></span></div>
<div class="gn" style="top:482px">534</div>
<div class="gn" style="top:500px"><span class="err"></span></div>
<div class="gn" style="top:518px">536</div>
<div class="gn" style="top:536px">537</div>
<div class="gn" style="top:554px">538</div>
  <div class="ln hl0" style="top:-4px">    <span class="k">private</span> <span class="k">void</span> <span class="b">btnDeleteActionPerformed</span>(java.awt.event.ActionEvent <span class="u">evt</span>) {</div>
<div class="ln" style="top:14px"></div>
<div class="ln" style="top:32px">        DefaultTableModel RecordTable = (DefaultTableModel)<span class="f">jTable1</span>.getModel();</div>
<div class="ln" style="top:50px">        <span class="k">int</span> SelectedRows = <span class="f">jTable1</span>.getSelectedRow();</div>
<div class="ln" style="top:68px"></div>
<div class="ln" style="top:86px">        <span class="k">try</span></div>
<div class="ln" style="top:104px">        {</div>
<div class="ln" style="top:122px">            <span class="f">id</span> = Integer.<span class="i">parseInt</span>(<span class="h" style="width:16px">s:</span>RecordTable.getValueAt(<span class="h" style="width:24px">row:</span>SelectedRows, <span class="h" style="width:48px">column:</span>0).toString());</div>
<div class="ln hl1" style="top:140px">            <span class="caret"></span></div>
<div class="ln" style="top:158px">            <span class="f">deleteItem</span> = JOptionPane.<span class="i">showConfirmDialog</span>(<span class="h" style="width:96px">parentComponent:</span><span class="k">null</span>,<span class="h" style="width:48px">message:</span><span class="s">&quot;confirm if you want to delete item&quot;</span>,<span class="h" style="width:40px">title:</span><span class="s">&quot;Warning&quot;</span>,<span class="h" style="width:80px">optionType:</span></div>
<div class="ln" style="top:176px">            <span class="k">if</span> (<span class="f">deleteItem</span> == JOptionPane.<span class="fi">YES_OPTION</span>)</div>
<div class="ln" style="top:194px">            {</div>
<div class="ln" style="top:212px"></div>
<div class="ln" style="top:230px">                Class.<span class="i">forName</span>(<span class="h" style="width:64px">className:</span><span class="s">&quot;com.mysql.cj.jdbc.Driver&quot;</span>);</div>
<div class="ln" style="top:248px">            <span class="f">sqlConn</span> = DriverManager.<span class="i">getConnection</span>(<span class="h" style="width:24px">url:</span><span class="fi">dataConn</span>, <span class="h" style="width:32px">user:</span><span class="fi">username</span>, <span class="fi">password</span>);</div>
<div class="ln" style="top:266px">            <span class="f">pst</span> = <span class="f">sqlConn</span>.prepareStatement(<span class="h" style="width:48px">string:</span><span class="s">&quot;delete from patients_records where id =?&quot;</span>);</div>
<div class="ln" style="top:284px"></div>
<div class="ln" style="top:302px">            <span class="f">pst</span>.setInt(<span class="h" style="width:16px">i:</span>1, <span class="h" style="width:24px">i1:</span><span class="f">id</span>);</div>
<div class="ln" style="top:320px">            <span class="f">pst</span>.executeUpdate();</div>
<div class="ln" style="top:338px">            JOptionPane.<span class="i">showMessageDialog</span>(<span class="h" style="width:96px">parentComponent:</span><span class="k">this</span>, <span class="h" style="width:48px">message:</span><span class="s">&quot;Deleted Updated&quot;</span>);</div>
<div class="ln" style="top:356px">            upDateDB();</div>
<div class="ln" style="top:374px"></div>
<div class="ln" style="top:392px">            <span class="f">jtxtFolder</span>.setText(<span class="h" style="width:16px">t:</span><span class="s">&quot;&quot;</span>);</div>
<div class="ln" style="top:410px">            <span class="f">jtxtFolder</span>.requestFocus();</div>
<div class="ln" style="top:428px">            <span class="f">jtxtName</span>.setText(<span class="h" style="width:16px">t:</span><span class="s">&quot;&quot;</span>);</div>
<div class="ln" style="top:446px">            <span class="f">jdcDOB</span>.<span class="e eh">setText</span>(&quot;&quot;);</div>
<div class="ln" style="top:464px">            <span class="f">cbGender</span>.<span class="e">setText</span>(&quot;&quot;);</div>
<div class="ln" style="top:482px">            <span class="f">jtxtReason</span>.setText(<span class="h" style="width:16px">t:</span><span class="s">&quot;&quot;</span>);</div>
<div class="ln" style="top:500px">            <span class="f">jdcVisit</span>.<span class="e">setText</span>(&quot;&quot;);</div>
<div class="ln" style="top:518px">            <span class="f">jtxtEmail</span>.setText(<span class="h" style="width:16px">t:</span><span class="s">&quot;&quot;</span>);</div>
<div class="ln" style="top:536px">            }</div>
<div class="ln" style="top:554px">        }</div>
  <div class="guide" style="left:64px;top:14px"></div>
  <div class="guide" style="left:96px;top:14px"></div>
  <div class="guide" style="left:128px;top:122px;height:431px"></div>
  <div class="guide" style="left:160px;top:212px;height:36px"></div>
  <div class="a" style="left:704px;top:0;width:1px;height:566px;background:#d7a6d6"></div>
  <!-- fold box & line -->
  <div class="a" style="left:42px;top:0px;width:11px;height:11px;border:1px solid #777;background:#fff"></div>
  <div class="a" style="left:45px;top:5px;width:5px;height:1px;background:#666"></div>
  <div class="a" style="left:46px;top:11px;width:2px;height:555px;background:#8a8a8a"></div>
  <!-- right scroll/stripe -->
  <div class="a" style="left:1166px;top:0;width:10px;height:566px;background:#f5f5f5"></div>
  <div class="a" style="left:1176px;top:0;width:13px;height:575px;background:#f0f0f0"></div>
  <div class="a" style="left:1166px;top:475px;width:10px;height:29px;background:#d6d6d6"></div>
  <div class="a" style="left:1179px;top:8px;width:7px;height:7px;background:#f0281e"></div>
  <div class="a" style="left:1177px;top:27px;width:11px;height:3px;background:#fbb80f"></div>
  <div class="a" style="left:1177px;top:35px;width:11px;height:3px;background:#fbb80f"></div>
  <div class="a" style="left:1177px;top:39px;width:11px;height:3px;background:#fbb80f"></div>
  <div class="a" style="left:1177px;top:47px;width:11px;height:3px;background:#fbb80f"></div>
  <div class="a" style="left:1177px;top:51px;width:11px;height:3px;background:#fbb80f"></div>
  <div class="a" style="left:1177px;top:83px;width:11px;height:3px;background:#fbb80f"></div>
  <div class="a" style="left:1177px;top:99px;width:11px;height:3px;background:#fbb80f"></div>
  <div class="a" style="left:1177px;top:415px;width:11px;height:3px;background:#fbb80f"></div>
  <div class="a" style="left:1177px;top:471px;width:11px;height:3px;background:#fbb80f"></div>
  <div class="a" style="left:1179px;top:484px;width:8px;height:1px;background:#555"></div>
  <div class="a" style="left:1182px;top:483px;width:3px;height:3px;background:#333"></div>
  <div class="a" style="left:1177px;top:495px;width:11px;height:3px;background:#f01010"></div>
  <div class="a" style="left:1177px;top:499px;width:11px;height:3px;background:#f01010"></div>
  <div class="a" style="left:1177px;top:515px;width:11px;height:3px;background:#fbb80f"></div>
  <div class="a" style="left:1177px;top:520px;width:11px;height:3px;background:#fbb80f"></div>
 </div>
 <div class="a" style="left:165px;top:27px;width:1024px;height:1px;background:#c8c8c8"></div>
 <div class="a" style="left:0;top:53px;width:1189px;height:1px;background:#c8c8c8"></div>
 <div class="a" style="left:0;top:619px;width:64px;height:10px;background:#e9e8e3"></div>
 <div class="a" style="left:64px;top:619px;width:1102px;height:10px;background:#f5f5f5"></div>
 <div class="a" style="left:64px;top:619px;width:634px;height:10px;background:#d9d9d9"></div>
 <div class="a" style="left:1166px;top:619px;width:10px;height:10px;background:#f5f5f5"></div>
 <div class="a" style="left:1176px;top:619px;width:13px;height:10px;background:#f0f0f0"></div>
</div>

<!-- ===== status bar ===== -->
<div class="a" style="left:1137px;top:699px;width:1px;height:18px;background:#c8c8c8"></div>
<div class="a" style="left:1247px;top:699px;width:1px;height:18px;background:#c8c8c8"></div>
<div class="a" style="left:1273px;top:699px;width:1px;height:18px;background:#c8c8c8"></div>
<div class="t tb" style="left:1176px;top:703px">515:13</div>
<div class="t tb" style="left:1250px;top:703px">INS</div>
<div class="t tb" style="left:1276px;top:703px">Unix (LF)</div>

<!-- ===== taskbar ===== -->
<!-- weather -->
<div class="a" style="left:21px;top:733px;width:21px;height:21px;border-radius:50%;background:radial-gradient(circle at 60% 40%,#ffb52e,#f7821b)"></div>
<div class="a" style="left:30px;top:727px;width:15px;height:15px;border-radius:50%;background:#c42b1c;color:#fff;font-size:10px;text-align:center;line-height:15px">1</div>
<div class="t" style="left:50px;top:730px;font-size:12px;color:#111">22°C</div>
<div class="t" style="left:50px;top:746px;font-size:12px;color:#444">Sunny</div>
<!-- start -->
<svg class="a" style="left:295px;top:732px" width="25" height="24" viewBox="0 0 25 24">
 <rect x="0.5" y="0.5" width="11" height="11" fill="#36a3f2"/><rect x="12.5" y="0.5" width="11" height="11" fill="#36a3f2"/>
 <rect x="0.5" y="12.5" width="11" height="11" fill="#1c7fd6"/><rect x="12.5" y="12.5" width="11" height="11" fill="#1c7fd6"/>
</svg>
<!-- search -->
<div class="a" style="left:333px;top:729px;width:218px;height:31px;border-radius:16px;background:#f3f3f4;border:1px solid #cdcdd0"></div>
<svg class="a" style="left:342px;top:736px" width="18" height="18" viewBox="0 0 18 18"><circle cx="7.5" cy="7.5" r="5.5" fill="none" stroke="#222" stroke-width="1.7"/><path d="M11.5 11.5L16 16" stroke="#222" stroke-width="1.8" stroke-linecap="round"/></svg>
<div class="t" style="left:369px;top:737px;font-size:13.5px;color:#555">Search</div>
<!-- task view -->
<svg class="a" style="left:562px;top:732px" width="25" height="24" viewBox="0 0 25 24"><rect x="7" y="1" width="17" height="16" fill="#f0f0f0" stroke="#cfcfcf"/><rect x="1" y="7" width="16" height="16" fill="#2a2a2a"/><rect x="7" y="7" width="10" height="10" fill="#bdbdbd"/></svg>
<!-- teams -->
<svg class="a" style="left:606px;top:731px" width="26" height="26" viewBox="0 0 26 26"><circle cx="13" cy="12" r="11" fill="#7b6fe0"/><path d="M4 22L2 25L9 22Z" fill="#7b6fe0"/><rect x="7" y="8" width="9" height="8" rx="1.5" fill="#fff"/><path d="M16 10.5L20 8V16L16 13.5Z" fill="#fff"/></svg>
<!-- access -->
<svg class="a" style="left:648px;top:731px" width="28" height="26" viewBox="0 0 28 26"><ellipse cx="18" cy="5" rx="8" ry="3" fill="#e0707a"/><rect x="10" y="5" width="16" height="16" fill="#b52a3a"/><ellipse cx="18" cy="21" rx="8" ry="3" fill="#8a1c28"/><rect x="1" y="7" width="13" height="13" rx="1.5" fill="#a4262c"/><text x="3.5" y="18" font-family="Liberation Sans" font-weight="bold" font-size="11" fill="#fff">A</text></svg>
<!-- excel -->
<svg class="a" style="left:694px;top:732px" width="27" height="24" viewBox="0 0 27 24"><rect x="6" y="1" width="20" height="22" rx="2" fill="#21a366"/><rect x="6" y="8" width="20" height="7" fill="#107c41"/><rect x="6" y="15" width="20" height="8" rx="1" fill="#185c37"/><rect x="0" y="5" width="13" height="13" rx="1.5" fill="#107c41"/><text x="2.5" y="16" font-family="Liberation Sans" font-weight="bold" font-size="11" fill="#fff">X</text></svg>
<!-- word -->
<svg class="a" style="left:738px;top:732px" width="27" height="24" viewBox="0 0 27 24"><rect x="6" y="1" width="20" height="22" rx="2" fill="#41a5ee"/><rect x="6" y="8" width="20" height="7" fill="#2b7cd3"/><rect x="6" y="15" width="20" height="8" rx="1" fill="#185abd"/><rect x="0" y="5" width="13" height="13" rx="1.5" fill="#185abd"/><text x="1.5" y="16" font-family="Liberation Sans" font-weight="bold" font-size="10" fill="#fff">W</text></svg>
<!-- explorer -->
<svg class="a" style="left:782px;top:732px" width="27" height="24" viewBox="0 0 27 24"><path d="M1 2H10L12 4H26V22H1Z" fill="#e8a920"/><rect x="1" y="7" width="25" height="15" rx="1" fill="#ffd04a"/><rect x="8" y="15" width="11" height="4" rx="1" fill="#1b8ad8"/></svg>
<div class="a" style="left:792px;top:761px;width:7px;height:3px;border-radius:2px;background:#777"></div>
<!-- outlook -->
<svg class="a" style="left:826px;top:732px" width="27" height="24" viewBox="0 0 27 24"><rect x="8" y="2" width="18" height="12" fill="#28a8ea"/><rect x="8" y="10" width="18" height="13" fill="#0a64ad"/><rect x="0" y="6" width="13" height="13" rx="1.5" fill="#0f6cbd"/><circle cx="6.5" cy="12.5" r="3.5" fill="none" stroke="#fff" stroke-width="1.8"/></svg>
<!-- chrome -->
<svg class="a" style="left:871px;top:731px" width="26" height="26" viewBox="0 0 26 26"><circle cx="13" cy="13" r="12" fill="#db4437"/><path d="M13 13L2.6 19A12 12 0 0 0 19 23.4Z" fill="#0f9d58"/><path d="M13 13L23.4 7A12 12 0 0 1 19 23.4Z" fill="#f4b400"/><path d="M13 13L2.6 19A12 12 0 0 1 1 13A12 12 0 0 1 3 6.6Z" fill="#0f9d58"/><circle cx="13" cy="13" r="5.6" fill="#fff"/><circle cx="13" cy="13" r="4.3" fill="#4285f4"/></svg>
<div class="a" style="left:880px;top:761px;width:7px;height:3px;border-radius:2px;background:#777"></div>
<!-- perf -->
<svg class="a" style="left:915px;top:734px" width="26" height="20" viewBox="0 0 26 20">
 <rect x="1" y="1.5" width="23.5" height="17" fill="#f4f6f8" stroke="#8a97a2" stroke-width="1.2"/>
 <path d="M1.6 17.8V14L5 12L7 4.5L9.5 13L12 14L14 12.5L16 4L18 12L21 13.5L24 14V17.8Z" fill="#a9dcfa" stroke="#3aa0e8" stroke-width="0.9"/>
</svg>
<!-- mysql wb -->
<svg class="a" style="left:959px;top:731px" width="26" height="26" viewBox="0 0 26 26">
 <defs><linearGradient id="mw" x1="0" y1="0" x2="0" y2="1"><stop offset="0" stop-color="#2a5a80"/><stop offset="1" stop-color="#173c5c"/></linearGradient></defs>
 <rect x="1" y="1" width="24" height="24" rx="3" fill="url(#mw)"/>
 <path d="M4 5Q9 4 13 9Q16 13 17 16Q19 18 21 21Q18 19 15.5 17.5L14 19L13 16Q11 12 8 10Q7 12 7.5 15Q5.5 11 4 5Z" fill="none" stroke="#e8eef4" stroke-width="0.9"/>
 <path d="M17.5 3.5L21.5 7.5M20 3L22.5 5.5" stroke="#fff" stroke-width="1.3"/>
</svg>
<!-- ai -->
<div class="a" style="left:1005px;top:733px;width:22px;height:22px;border-radius:50%;background:#fff"></div>
<svg class="a" style="left:1009px;top:736px" width="15" height="16" viewBox="0 0 15 16">
 <path d="M2 5Q7 0.5 12 5Z" fill="#3ddc84"/>
 <rect x="1.5" y="5" width="12" height="9" rx="1" fill="#4a8af4"/>
 <path d="M3.5 14L6 6.5H8L10.5 14H9L8.3 12H5.7L5 14ZM6.1 10.8H7.9L7 8Z" fill="#0b2a4a"/>
 <rect x="11" y="6.5" width="1.6" height="7.5" fill="#0b2a4a"/>
</svg>
<!-- netbeans active -->
<div class="a" style="left:1041px;top:724px;width:38px;height:38px;border-radius:5px;background:#ececee;border:1px solid #d6d6d9"></div>
<svg class="a" style="left:1045px;top:729px" width="30" height="30" viewBox="0 0 30 30">
 <path d="M15 3L25.5 9V21L15 27L4.5 21V9Z" fill="#fff"/>
 <path d="M15 14.5L21.5 11V18.5L15 22Z" fill="#d5dde6"/>
 <path d="M15 7.5L21.5 11L15 14.5L8.5 11Z" fill="#eef3e0"/>
 <path d="M6.3 9.8L15 4.8L23.7 9.8" fill="none" stroke="#9cc43a" stroke-width="3.2" stroke-linejoin="round"/>
 <path d="M6.3 9.5V20.3" fill="none" stroke="#b8284a" stroke-width="3.2" stroke-linecap="square"/>
 <path d="M6.3 20.3L15 25.3" fill="none" stroke="#e03a60" stroke-width="3.2"/>
 <path d="M23.7 9.5V20.3" fill="none" stroke="#3a78d0" stroke-width="3.2" stroke-linecap="square"/>
 <path d="M23.7 20.3L15 25.3" fill="none" stroke="#4a9ae8" stroke-width="3.2"/>
</svg>
<div class="a" style="left:1052px;top:760px;width:16px;height:3px;border-radius:2px;background:#1a73c8"></div>
<!-- tray -->
<svg class="a" style="left:1105px;top:739px" width="13" height="8" viewBox="0 0 13 8"><path d="M1 7L6.5 1.5L12 7" fill="none" stroke="#222" stroke-width="1.3"/></svg>
<div class="t" style="left:1138px;top:731px;font-size:11.5px;color:#222">ENG</div>
<div class="t" style="left:1143px;top:747px;font-size:11.5px;color:#222">US</div>
<svg class="a" style="left:1179px;top:737px" width="18" height="15" viewBox="0 0 18 15"><path d="M1 5.5Q9 -1.5 17 5.5M3.5 8Q9 3.5 14.5 8M6 10.5Q9 8 12 10.5" fill="none" stroke="#222" stroke-width="1.3"/><circle cx="9" cy="13" r="1.3" fill="#222"/></svg>
<svg class="a" style="left:1203px;top:736px" width="20" height="16" viewBox="0 0 20 16"><path d="M1.5 5.5H4.5L9 2V14L4.5 10.5H1.5Z" fill="none" stroke="#222" stroke-width="1.1"/><path d="M12 5Q14 8 12 11M14.5 3Q17.5 8 14.5 13" fill="none" stroke="#222" stroke-width="1.1"/></svg>
<svg class="a" style="left:1227px;top:739px" width="18" height="11" viewBox="0 0 18 11"><rect x="1" y="1" width="13.5" height="9" rx="2" fill="none" stroke="#222" stroke-width="1.2"/><rect x="3" y="3" width="9.5" height="5" fill="#222"/><rect x="15.5" y="3.5" width="2" height="4" fill="#222"/></svg>
<div class="t" style="left:1295px;top:731px;font-size:11.5px;color:#111">13:18</div>
<div class="t" style="left:1262px;top:747px;font-size:11.5px;color:#111">2023/06/04</div>
<div class="a" style="left:1330px;top:736px;width:16px;height:16px;border-radius:50%;background:#0d63c9;color:#fff;font-size:10px;text-align:center;line-height:16px">2</div>

</body></html>
